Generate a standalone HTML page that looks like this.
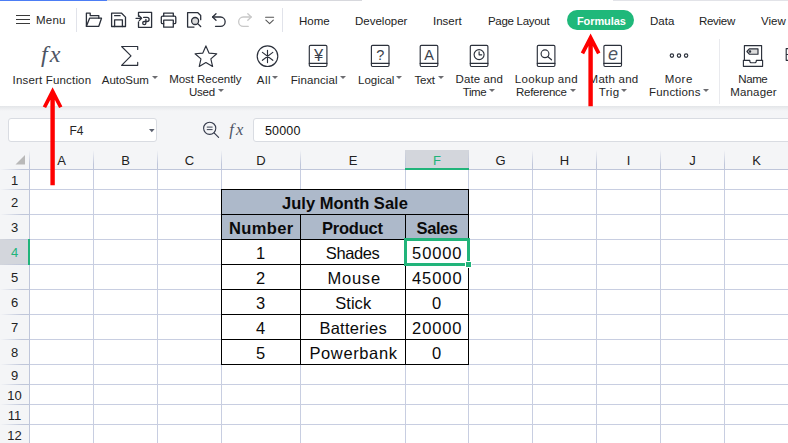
<!DOCTYPE html>
<html lang="en">
<head>
<meta charset="utf-8">
<title>Formulas - Insert Function</title>
<style>
*{box-sizing:border-box;margin:0;padding:0}
html,body{width:788px;height:443px;overflow:hidden;background:#fff}
body{position:relative;font-family:"Liberation Sans","DejaVu Sans",sans-serif;color:#222;font-size:12px}
.abs{position:absolute}
#topblue{left:0;top:0;width:107px;height:1px;background:#4c7df5}
#topgray{left:107px;top:0;width:255px;height:1px;background:#d7d8dd}
#topgray2{left:613px;top:0;width:175px;height:1px;background:#e2e3e8}
#ribbon{left:0;top:0;width:788px;height:106px;background:#fff}
#band{left:0;top:106px;width:788px;height:44px;background:#f4f5f7}
#shadow{left:0;top:106px;width:788px;height:5px;background:linear-gradient(#e3e5e8,#f4f5f7)}
.t{position:absolute;white-space:nowrap;line-height:14px;font-size:12px;color:#262626}
.tab{position:absolute;white-space:nowrap;line-height:14px;font-size:11.5px;color:#222;top:14px}
.lbl{position:absolute;white-space:nowrap;line-height:14px;font-size:11.5px;color:#262626}
.car{position:absolute;width:0;height:0;border-left:3px solid transparent;border-right:3px solid transparent;border-top:3.5px solid #6c6c70}
.vdiv{position:absolute;width:1px;background:#e1e3ea}
svg{position:absolute;overflow:visible}
.ic{fill:none;stroke:#2b303b;stroke-width:1.3;stroke-linecap:round;stroke-linejoin:round}
.sy{font-family:"Liberation Sans","DejaVu Sans",sans-serif;fill:#3a3f4b;text-anchor:middle}
#grid{left:0;top:150px;width:788px;height:293px;background:#fff}
.hdr{position:absolute;background:#f4f5f7}
.hl{position:absolute;height:1px;background:#c8cee1}
.vl{position:absolute;width:1px;background:#c8cee1}
.ch{position:absolute;top:153px;font-size:13px;line-height:15px;color:#222;text-align:center}
.rh{position:absolute;left:0;width:29px;font-size:13px;line-height:15px;color:#222;text-align:center}
.c{position:absolute;font-size:17px;line-height:20px;color:#0a0a0a;white-space:nowrap}
.b{font-weight:700}
.bk{position:absolute;background:#000}
</style>
</head>
<body>
<div class="abs" id="ribbon"></div>
<div class="abs" id="topblue"></div>
<div class="abs" id="topgray"></div>
<div class="abs" id="topgray2"></div>
<div class="abs" id="band"></div>
<div class="abs" id="shadow"></div>
<div class="abs" id="grid"></div>
<div class="hdr" style="left:0;top:150px;width:788px;height:19px"></div>
<div class="hdr" style="left:0;top:169px;width:29px;height:274px"></div>
<div class="abs" style="left:405px;top:150px;width:64px;height:18px;background:#d3d6dc"></div>
<div class="abs" style="left:0;top:239px;width:28px;height:26px;background:#d3d6dc"></div>
<div class="hl" style="left:0;top:169px;width:29px;background:linear-gradient(to right,rgba(191,198,218,0),#bfc6da 75%)"></div>
<div class="hl" style="left:29px;top:169px;width:759px;background:#bfc6da"></div>
<div class="hl" style="left:0;top:189px;width:29px;background:linear-gradient(to right,rgba(191,198,218,0),#bfc6da 75%)"></div>
<div class="hl" style="left:29px;top:189px;width:759px;background:#c8cee1"></div>
<div class="hl" style="left:0;top:214px;width:29px;background:linear-gradient(to right,rgba(191,198,218,0),#bfc6da 75%)"></div>
<div class="hl" style="left:29px;top:214px;width:759px;background:#c8cee1"></div>
<div class="hl" style="left:0;top:239px;width:29px;background:linear-gradient(to right,rgba(191,198,218,0),#bfc6da 75%)"></div>
<div class="hl" style="left:29px;top:239px;width:759px;background:#c8cee1"></div>
<div class="hl" style="left:0;top:264px;width:29px;background:linear-gradient(to right,rgba(191,198,218,0),#bfc6da 75%)"></div>
<div class="hl" style="left:29px;top:264px;width:759px;background:#c8cee1"></div>
<div class="hl" style="left:0;top:289px;width:29px;background:linear-gradient(to right,rgba(191,198,218,0),#bfc6da 75%)"></div>
<div class="hl" style="left:29px;top:289px;width:759px;background:#c8cee1"></div>
<div class="hl" style="left:0;top:314px;width:29px;background:linear-gradient(to right,rgba(191,198,218,0),#bfc6da 75%)"></div>
<div class="hl" style="left:29px;top:314px;width:759px;background:#c8cee1"></div>
<div class="hl" style="left:0;top:339px;width:29px;background:linear-gradient(to right,rgba(191,198,218,0),#bfc6da 75%)"></div>
<div class="hl" style="left:29px;top:339px;width:759px;background:#c8cee1"></div>
<div class="hl" style="left:0;top:364px;width:29px;background:linear-gradient(to right,rgba(191,198,218,0),#bfc6da 75%)"></div>
<div class="hl" style="left:29px;top:364px;width:759px;background:#c8cee1"></div>
<div class="hl" style="left:0;top:384px;width:29px;background:linear-gradient(to right,rgba(191,198,218,0),#bfc6da 75%)"></div>
<div class="hl" style="left:29px;top:384px;width:759px;background:#c8cee1"></div>
<div class="hl" style="left:0;top:404px;width:29px;background:linear-gradient(to right,rgba(191,198,218,0),#bfc6da 75%)"></div>
<div class="hl" style="left:29px;top:404px;width:759px;background:#c8cee1"></div>
<div class="hl" style="left:0;top:424px;width:29px;background:linear-gradient(to right,rgba(191,198,218,0),#bfc6da 75%)"></div>
<div class="hl" style="left:29px;top:424px;width:759px;background:#c8cee1"></div>
<div class="vl" style="left:29px;top:150px;height:19px;background:linear-gradient(to bottom,rgba(191,198,218,0),#bfc6da 75%)"></div>
<div class="vl" style="left:29px;top:169px;height:274px;background:#bfc6da"></div>
<div class="vl" style="left:93px;top:150px;height:19px;background:linear-gradient(to bottom,rgba(191,198,218,0),#bfc6da 75%)"></div>
<div class="vl" style="left:93px;top:170px;height:273px"></div>
<div class="vl" style="left:157px;top:150px;height:19px;background:linear-gradient(to bottom,rgba(191,198,218,0),#bfc6da 75%)"></div>
<div class="vl" style="left:157px;top:170px;height:273px"></div>
<div class="vl" style="left:221px;top:150px;height:19px;background:linear-gradient(to bottom,rgba(191,198,218,0),#bfc6da 75%)"></div>
<div class="vl" style="left:221px;top:170px;height:273px"></div>
<div class="vl" style="left:300px;top:150px;height:19px;background:linear-gradient(to bottom,rgba(191,198,218,0),#bfc6da 75%)"></div>
<div class="vl" style="left:300px;top:170px;height:273px"></div>
<div class="vl" style="left:405px;top:150px;height:19px;background:linear-gradient(to bottom,rgba(191,198,218,0),#bfc6da 75%)"></div>
<div class="vl" style="left:405px;top:170px;height:273px"></div>
<div class="vl" style="left:468px;top:150px;height:19px;background:linear-gradient(to bottom,rgba(191,198,218,0),#bfc6da 75%)"></div>
<div class="vl" style="left:468px;top:170px;height:273px"></div>
<div class="vl" style="left:532px;top:150px;height:19px;background:linear-gradient(to bottom,rgba(191,198,218,0),#bfc6da 75%)"></div>
<div class="vl" style="left:532px;top:170px;height:273px"></div>
<div class="vl" style="left:596px;top:150px;height:19px;background:linear-gradient(to bottom,rgba(191,198,218,0),#bfc6da 75%)"></div>
<div class="vl" style="left:596px;top:170px;height:273px"></div>
<div class="vl" style="left:660px;top:150px;height:19px;background:linear-gradient(to bottom,rgba(191,198,218,0),#bfc6da 75%)"></div>
<div class="vl" style="left:660px;top:170px;height:273px"></div>
<div class="vl" style="left:724px;top:150px;height:19px;background:linear-gradient(to bottom,rgba(191,198,218,0),#bfc6da 75%)"></div>
<div class="vl" style="left:724px;top:170px;height:273px"></div>
<div class="abs" style="left:405px;top:168px;width:64px;height:2px;background:#21b47a"></div>
<div class="abs" style="left:28px;top:239px;width:2px;height:26px;background:#21b47a"></div>
<svg width="30" height="20" viewBox="0 0 30 20" style="left:0;top:150px"><path d="M25 5V14.500H15.500z" fill="#b9b9b9"/></svg>
<div class="ch" style="left:30px;width:63px;">A</div>
<div class="ch" style="left:94px;width:63px;">B</div>
<div class="ch" style="left:158px;width:63px;">C</div>
<div class="ch" style="left:222px;width:78px;">D</div>
<div class="ch" style="left:301px;width:104px;">E</div>
<div class="ch" style="left:406px;width:62px;color:#21b47a;">F</div>
<div class="ch" style="left:469px;width:63px;">G</div>
<div class="ch" style="left:533px;width:63px;">H</div>
<div class="ch" style="left:597px;width:63px;">I</div>
<div class="ch" style="left:661px;width:63px;">J</div>
<div class="ch" style="left:725px;width:63px;">K</div>
<div class="rh" style="top:172.5px;">1</div>
<div class="rh" style="top:195.0px;">2</div>
<div class="rh" style="top:220.0px;">3</div>
<div class="rh" style="top:245.0px;color:#21b47a;">4</div>
<div class="rh" style="top:270.0px;">5</div>
<div class="rh" style="top:295.0px;">6</div>
<div class="rh" style="top:320.0px;">7</div>
<div class="rh" style="top:345.0px;">8</div>
<div class="rh" style="top:367.5px;">9</div>
<div class="rh" style="top:387.5px;">10</div>
<div class="rh" style="top:407.5px;">11</div>
<div class="rh" style="top:427.5px;">12</div>
<div class="abs" style="left:222px;top:190px;width:246px;height:49px;background:#adb9ca"></div>
<div class="bk" style="left:221px;top:189px;width:248px;height:1px"></div>
<div class="bk" style="left:221px;top:214px;width:248px;height:1px"></div>
<div class="bk" style="left:221px;top:239px;width:248px;height:1px"></div>
<div class="bk" style="left:221px;top:264px;width:248px;height:1px"></div>
<div class="bk" style="left:221px;top:289px;width:248px;height:1px"></div>
<div class="bk" style="left:221px;top:314px;width:248px;height:1px"></div>
<div class="bk" style="left:221px;top:339px;width:248px;height:1px"></div>
<div class="bk" style="left:221px;top:364px;width:248px;height:1px"></div>
<div class="bk" style="left:221px;top:189px;width:1px;height:176px"></div>
<div class="bk" style="left:468px;top:189px;width:1px;height:176px"></div>
<div class="bk" style="left:300px;top:214px;width:1px;height:151px"></div>
<div class="bk" style="left:405px;top:214px;width:1px;height:151px"></div>
<div class="c b" style="left:282.1px;top:192.7px;letter-spacing:0.01px;font-size:16.5px">July Month Sale</div>
<div class="c b" style="left:229.0px;top:217.7px;letter-spacing:0.39px;font-size:16.5px">Number</div>
<div class="c b" style="left:321.9px;top:217.7px;letter-spacing:-0.19px;font-size:16.5px">Product</div>
<div class="c b" style="left:416.6px;top:217.7px;letter-spacing:-0.43px;font-size:16.5px">Sales</div>
<div class="c" style="left:255.9px;top:242.7px;letter-spacing:0.00px;font-size:16.5px">1</div>
<div class="c" style="left:325.8px;top:242.7px;letter-spacing:-0.39px;font-size:16.5px">Shades</div>
<div class="c" style="left:412.1px;top:242.7px;letter-spacing:0.88px;font-size:16.5px">50000</div>
<div class="c" style="left:255.9px;top:267.7px;letter-spacing:0.00px;font-size:16.5px">2</div>
<div class="c" style="left:327.4px;top:267.7px;letter-spacing:0.79px;font-size:16.5px">Mouse</div>
<div class="c" style="left:412.0px;top:267.7px;letter-spacing:0.93px;font-size:16.5px">45000</div>
<div class="c" style="left:255.9px;top:292.7px;letter-spacing:0.00px;font-size:16.5px">3</div>
<div class="c" style="left:335.2px;top:292.7px;letter-spacing:0.06px;font-size:16.5px">Stick</div>
<div class="c" style="left:432.0px;top:292.7px;letter-spacing:0.00px;font-size:16.5px">0</div>
<div class="c" style="left:255.9px;top:317.7px;letter-spacing:0.00px;font-size:16.5px">4</div>
<div class="c" style="left:319.4px;top:317.7px;letter-spacing:0.27px;font-size:16.5px">Batteries</div>
<div class="c" style="left:412.1px;top:317.7px;letter-spacing:0.88px;font-size:16.5px">20000</div>
<div class="c" style="left:255.9px;top:342.7px;letter-spacing:0.00px;font-size:16.5px">5</div>
<div class="c" style="left:309.4px;top:342.7px;letter-spacing:0.63px;font-size:16.5px">Powerbank</div>
<div class="c" style="left:432.0px;top:342.7px;letter-spacing:0.00px;font-size:16.5px">0</div>
<div class="abs" style="left:404px;top:238px;width:66px;height:28px;border:3px solid #21b47a"></div>
<div class="abs" style="left:465px;top:261px;width:7px;height:7px;background:#fff"></div>
<div class="abs" style="left:466px;top:262px;width:5px;height:5px;background:#21b47a"></div>

<!-- ===== top bar ===== -->
<div class="t" style="left:36px;top:13px;font-size:11.5px;letter-spacing:0.2px">Menu</div>
<div class="vdiv" style="left:76px;top:8px;height:24px"></div>
<div class="vdiv" style="left:282px;top:8px;height:24px"></div>
<div class="tab" style="left:299px">Home</div>
<div class="tab" style="left:355px">Developer</div>
<div class="tab" style="left:433px">Insert</div>
<div class="tab" style="left:488px;letter-spacing:-0.3px">Page Layout</div>
<div class="abs" style="left:567px;top:10px;width:67px;height:20px;border-radius:10px;background:#1fb87a"></div>
<div class="tab" style="left:577px;color:#fff;font-weight:700;font-size:11px;letter-spacing:-0.1px">Formulas</div>
<div class="tab" style="left:650px">Data</div>
<div class="tab" style="left:699px;letter-spacing:-0.3px">Review</div>
<div class="tab" style="left:761px">View</div>
<svg width="788" height="40" viewBox="0 0 788 40" style="left:0;top:0">
 <g stroke="#3a3a3a" stroke-width="1" fill="none"><path d="M16 15.500H30M16 19.500H30M16 23.500H30"/></g>
 <g class="ic">
  <path d="M86.400 26.300V13.200h3.800v2.400h8.600v2.600"/>
  <path d="M86.400 26.300l3.200-8.100h11.900l-2.700 8.100z"/>
  <path d="M111.600 13.200h10l3.900 3.900v9.400h-13.900z"/>
  <path d="M114.600 15.700h5.500M114.600 26.500v-6.700h7.800v6.700"/>
  <path d="M138.500 16.300V12.400h13.100v14.900h-13.100V21.800"/>
  <path d="M136 18.300h5.400M139.300 16l2.300 2.300-2.300 2.300"/>
  <path d="M143.600 17.300H147a2.100 2.100 0 0 1 0 4.200H144.300a1.600 1.600 0 1 0 1.600 1.600V19.300"/>
  <path d="M163.700 16.100v-3h9.600v3"/>
  <path d="M163.700 23.700h-1.100a1.300 1.300 0 0 1-1.300-1.300v-5a1.300 1.300 0 0 1 1.300-1.300h11.900a1.300 1.300 0 0 1 1.300 1.300v5a1.300 1.300 0 0 1-1.300 1.300h-1.100"/>
  <path d="M163.700 20.200h9.600v7h-9.600z"/>
  <path d="M194 27.100h-6.400v-14.500h10l3.100 2.800v4.300"/>
  <circle cx="195.100" cy="21" r="3.500" fill="#dcdcdc"/>
  <path d="M197.700 23.600l3 2.900"/>
  <path d="M212.600 17H220.500a4.650 4.650 0 0 1 0 9.300H215.500"/>
  <path d="M216 13.700l-3.400 3.300 3.400 3.300"/>
 </g>
 <g class="ic" style="stroke:#c8c8c8">
  <path d="M251.200 17H243.300a4.650 4.650 0 0 0 0 9.300H248.300"/>
  <path d="M247.800 13.700l3.400 3.300-3.400 3.300"/>
 </g>
 <g class="ic" style="stroke:#555;stroke-width:1.100">
  <path d="M265.600 17.300h8M265.900 20.100l3.700 3.500 3.700-3.500"/>
 </g>
</svg>

<!-- ribbon -->
<svg width="788" height="110" viewBox="0 0 788 110" style="left:0;top:0">
<text x="41" y="61.800" letter-spacing="2.200" font-family="'Liberation Serif','DejaVu Serif',serif" font-style="italic" font-size="24" fill="#4e5464">fx</text>
<g class="ic" style="stroke-width:1.150">
<path d="M137.700 49.400V46.500H121.600L131 55.800L121.600 65.300H137.700V62.400"/>
<path d="M205.90 45.90L208.96 53.09L216.74 53.78L210.85 58.91L212.60 66.52L205.90 62.50L199.20 66.52L200.95 58.91L195.06 53.78L202.84 53.09z"/>
<circle cx="267.500" cy="56.200" r="10.300"/>
<path d="M267.500 50.200V62.600M262.400 52.400L272.800 60.300M272.800 52.400L262.400 60.300"/>
<rect x="309.3" y="45.3" width="17.6" height="21.2" rx="1.2"/><path d="M309.3 63.400h17.600"/>
<rect x="371.4" y="45.3" width="17.6" height="21.2" rx="1.2"/><path d="M371.4 63.400h17.600"/>
<rect x="420.2" y="45.3" width="17.6" height="21.2" rx="1.2"/><path d="M420.2 63.400h17.600"/>
<rect x="470.3" y="45.3" width="17.6" height="21.2" rx="1.2"/><path d="M470.3 63.400h17.600"/>
<rect x="537.3" y="45.3" width="17.6" height="21.2" rx="1.2"/><path d="M537.3 63.400h17.600"/>
<rect x="603.9" y="45.3" width="17.6" height="21.2" rx="1.2"/><path d="M603.9 63.400h17.600"/>
<circle cx="479.100" cy="54.600" r="5"/><path d="M479.100 51.700V54.800H481.700"/>
<circle cx="545" cy="53.800" r="3.900"/><path d="M547.900 56.700L551.500 59.800"/>
<circle cx="671.900" cy="55.600" r="1.700"/><circle cx="679" cy="55.600" r="1.700"/><circle cx="686.100" cy="55.600" r="1.700"/>
<path d="M744.400 60.300V45.600H761.600V60.300"/>
<path d="M743.400 60.300H749.800V61.200a1.500 1.500 0 0 0 1.500 1.500h3.500a1.500 1.500 0 0 0 1.500-1.500V60.300H762.600V66.300H743.400z"/>
<path d="M749.300 48.800H758V54.200H749.300L746.900 51.500z" fill="#dcdcdc"/>
<circle cx="750" cy="51.500" r="0.700"/>
<path d="M790 48.600H786.200V60.300H790M786.200 54.500H790"/>
</g>
<text class="sy" x="318.500" y="61" font-size="16.500">¥</text>
<text class="sy" x="380.300" y="60" font-size="14.500">?</text>
<text class="sy" x="429.200" y="59.800" font-size="14.500">A</text>
<text class="sy" x="613" y="59.900" font-size="18" font-style="italic" style="fill:#4f5561">e</text>
</svg>
<div class="vdiv" style="left:719px;top:39px;height:65px;background:#e9eaee"></div>
<div class="lbl" style="left:12.5px;top:73px;letter-spacing:0.18px">Insert Function</div>
<div class="lbl" style="left:101.8px;top:73px;letter-spacing:-0.04px">AutoSum</div>
<div class="car" style="left:152.0px;top:75.6px"></div>
<div class="lbl" style="left:169.2px;top:72px;letter-spacing:-0.04px">Most Recently</div>
<div class="lbl" style="left:189.0px;top:85px;letter-spacing:-0.22px">Used</div>
<div class="car" style="left:217.6px;top:89.0px"></div>
<div class="lbl" style="left:256.7px;top:73px;letter-spacing:0.56px">All</div>
<div class="car" style="left:272.4px;top:75.6px"></div>
<div class="lbl" style="left:290.7px;top:73px;letter-spacing:0.10px">Financial</div>
<div class="car" style="left:339.6px;top:75.6px"></div>
<div class="lbl" style="left:358.0px;top:73px;letter-spacing:-0.01px">Logical</div>
<div class="car" style="left:396.2px;top:75.6px"></div>
<div class="lbl" style="left:414.5px;top:73px;letter-spacing:-0.23px">Text</div>
<div class="car" style="left:438.0px;top:75.6px"></div>
<div class="lbl" style="left:455.6px;top:72px;letter-spacing:0.10px">Date and</div>
<div class="lbl" style="left:462.8px;top:85px;letter-spacing:-0.45px">Time</div>
<div class="car" style="left:489.2px;top:89.0px"></div>
<div class="lbl" style="left:514.8px;top:72px;letter-spacing:0.30px">Lookup and</div>
<div class="lbl" style="left:516.0px;top:85px;letter-spacing:-0.27px">Reference</div>
<div class="car" style="left:569.5px;top:89.0px"></div>
<div class="lbl" style="left:588.6px;top:72px;letter-spacing:0.24px">Math and</div>
<div class="lbl" style="left:598.7px;top:85px;letter-spacing:0.34px">Trig</div>
<div class="car" style="left:620.6px;top:89.0px"></div>
<div class="lbl" style="left:664.7px;top:72px;letter-spacing:0.47px">More</div>
<div class="lbl" style="left:649.0px;top:85px;letter-spacing:0.19px">Functions</div>
<div class="car" style="left:702.7px;top:89.0px"></div>
<div class="lbl" style="left:738.3px;top:72px;letter-spacing:-0.43px">Name</div>
<div class="lbl" style="left:730.2px;top:85px;letter-spacing:0.17px">Manager</div>
<!-- formula bar -->
<div class="abs" style="left:8px;top:118px;width:149px;height:24px;background:#fff;border:1px solid #d9dce2;border-radius:3px"></div>
<div class="t" style="left:69.5px;top:124px;font-size:12px;line-height:15px">F4</div>
<div class="abs" style="left:253px;top:118px;width:545px;height:24px;background:#fff;border:1px solid #d9dce2;border-radius:3px"></div>
<div class="t" style="left:265px;top:123.500px;font-size:12.5px;line-height:15px;letter-spacing:0.15px;color:#111">50000</div>
<svg width="788" height="150" viewBox="0 0 788 150" style="left:0;top:0">
<path d="M149 128.900H154.600L151.800 132.300z" fill="#5d6270"/><g class="ic" style="stroke:#353b4c;stroke-width:1.100"><circle cx="209.700" cy="128.300" r="6.100"/><path d="M214.100 132.800L218.600 137.300"/><path d="M207.200 127.100H212.200M207.200 129.600H212.200" stroke-width="0.950"/></g>
<text x="229.300" y="134.500" letter-spacing="2.200" font-family="'Liberation Serif','DejaVu Serif',serif" font-style="italic" font-size="16.500" fill="#4e5464">fx</text>
</svg>
<!-- arrows -->
<svg width="788" height="443" viewBox="0 0 788 443" style="left:0;top:0">
 <g fill="#fe0000">
  <polygon points="52.6,87.2 42.8,106.4 46.1,108.0 50.4,99.8 50.4,185.3 54.8,185.3 54.8,99.8 59.1,108.0 62.4,106.4"/>
  <polygon points="590.6,33.4 580.8,52.6 584.1,54.2 588.4,46.0 588.4,106.3 592.8,106.3 592.8,46.0 597.1,54.2 600.4,52.6"/>
 </g>
</svg>
</body>
</html>
